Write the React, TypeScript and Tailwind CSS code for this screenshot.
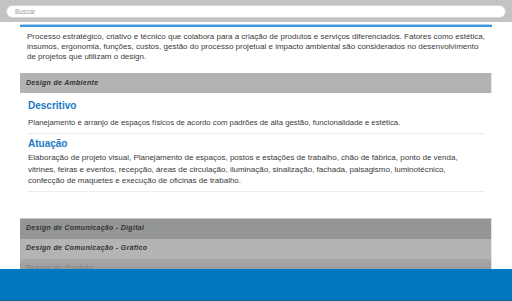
const font = "font-['Liberation_Sans',Arial,sans-serif]"

const SectionBar = ({ title, tone, text = "text-[#333]" }: { title: string; tone: string; text?: string }) => (
  <div className={`h-[20px] flex items-center px-[6px] border-r border-[#e4e4e4] ${tone}`}>
    <span className={`text-[7px] font-bold italic tracking-[0.3px] ${text}`}>{title}</span>
  </div>
)

export default function App() {
  return (
    <div className={`relative h-[301px] w-[512px] overflow-hidden bg-white ${font}`}>
      {/* SEARCH BAR */}
      <div className="h-[22px] bg-[#c3c3c3] px-[6px] pt-[5px]">
        <div className="h-[13px] rounded-full bg-white border border-[#d6d6d6] flex items-center px-[8px]">
          <span className="text-[6.5px] text-[#9a9a9a]">Buscar</span>
        </div>
      </div>

      <div className="mx-[20px] mt-[2px]">
        <div className="h-[3px] bg-[#3c9bdb] border-t border-[#a8d5f2]"></div>

        <p className="mt-[5px] px-[7px] text-[8px] leading-[10px] text-[#3a3a3a]">
          Processo estratégico, criativo e técnico que colabora para a criação de produtos e serviços diferenciados.
          Fatores como estética, insumos, ergonomia, funções, custos, gestão do processo projetual e impacto ambiental
          são considerados no desenvolvimento de projetos que utilizam o design.
        </p>

        <div className="mt-[11px]">
          <SectionBar title="Design de Ambiente" tone="bg-[#b3b3b3]" />
        </div>

        <div className="px-[8px]">
          <h2 className="mt-[6px] text-[10px] leading-[14px] font-bold text-[#1b78c6]">Descritivo</h2>
          <p className="mt-[5px] text-[7.75px] leading-[10px] text-[#3a3a3a] pb-[5px] border-b border-[#ececec]">
            Planejamento e arranjo de espaços físicos de acordo com padrões de alta gestão, funcionalidade e estética.
          </p>
          <h2 className="mt-[3px] text-[10px] leading-[14px] font-bold text-[#1b78c6]">Atuação</h2>
          <p className="mt-[1px] text-[8px] leading-[11.5px] text-[#3a3a3a] pb-[4px] border-b border-[#ececec]">
            Elaboração de projeto visual, Planejamento de espaços, postos e estações de trabalho, chão de fábrica, ponto
            de venda, vitrines, feiras e eventos, recepção, áreas de circulação, iluminação, sinalização, fachada,
            paisagismo, luminotécnico, confecção de maquetes e execução de oficinas de trabalho.
          </p>
        </div>

        <div className="mt-[26px] border-t border-[#c9c9c9]">
          <SectionBar title="Design de Comunicação - Digital" tone="bg-[#949696]" />
          <SectionBar title="Design de Comunicação - Gráfico" tone="bg-[#b4b4b4]" />
          <div className="bg-gradient-to-b from-[#a8a8a8] to-[#909090]">
            <SectionBar title="Design de Produto" tone="bg-transparent" text="text-[#8a8a8a]" />
          </div>
        </div>
      </div>

      {/* FOOTER */}
      <div className="absolute bottom-0 left-0 right-0 h-[32px] bg-[#0077c1] border-b border-[#1a5e8f]"></div>
    </div>
  )
}
